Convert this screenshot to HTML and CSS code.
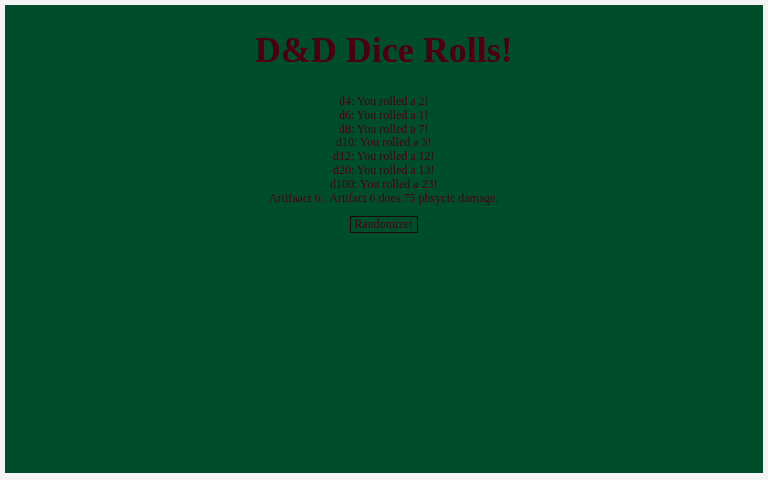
FILE: index.html
```html
<!DOCTYPE html>
<html>
<head>
<meta charset="utf-8">
<link rel="stylesheet" href="styles.css">
</head>
<body>
<main class="board">
  <h1 class="title">D&amp;D Dice Rolls!</h1>
  <div class="rolls">
    <div>d4: You rolled a 2!</div>
    <div>d6: You rolled a 1!</div>
    <div>d8: You rolled a 7!</div>
    <div>d10: You rolled a 3!</div>
    <div>d12: You rolled a 12!</div>
    <div>d20: You rolled a 13!</div>
    <div>d100: You rolled a 23!</div>
    <div>Artifaact 6:&nbsp; Artifact 6 does 75 phsycic damage.</div>
  </div>
  <button class="randomize" type="button">Randomize!</button>
</main>
</body>
</html>
```
FILE: styles.css
```css
html, body {
  margin: 0;
  background: #f4f4f4;
}
body {
  padding: 5px;
  font-family: "Liberation Serif", "Times New Roman", serif;
  color: #4a0012;
}
.board {
  height: 468px;
  background: #004d2c;
  display: flex;
  flex-direction: column;
  align-items: center;
  text-align: center;
}
.title {
  margin: 25px 0 0;
  font-size: 36px;
  font-weight: bold;
  line-height: 40px;
}
.rolls {
  margin-top: 25px;
  font-size: 12px;
  line-height: 13.8px;
}
.randomize {
  margin-top: 11px;
  font: 12px "Liberation Serif", "Times New Roman", serif;
  line-height: 13px;
  color: #4a0012;
  background: transparent;
  border: 1px solid #1a0a0a;
  padding: 1px 4px;
}
```
